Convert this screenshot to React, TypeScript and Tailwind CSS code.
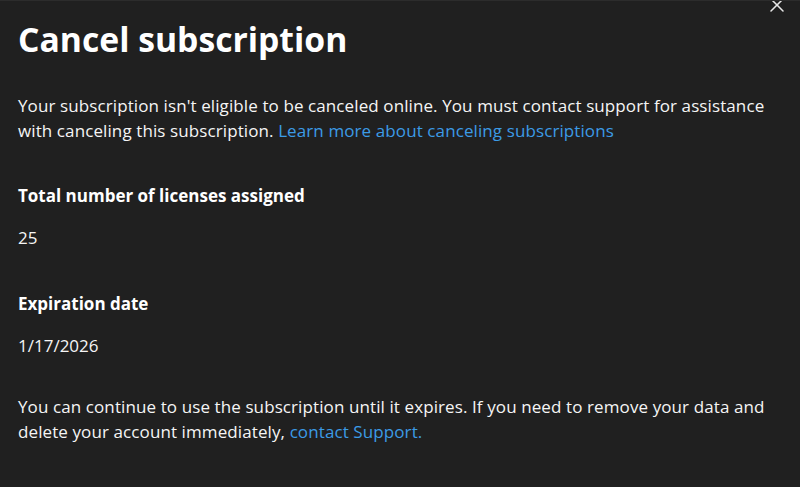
import { X } from 'lucide-react';

const App = () => {
  return (
    <div className="relative w-[800px] h-[487px] overflow-hidden bg-[#202020] border-t border-[#2c2c2c] text-[#f5f5f5] font-['Open_Sans',sans-serif]">
      <button className="absolute -top-[8px] right-[11px] text-[#e8e8e8]">
        <X className="w-[24px] h-[24px]" strokeWidth={1.5} />
      </button>

      <div className="px-[18px] pt-[13px]">
        <h1 className="text-[33.7px] leading-[50px] font-bold text-white">Cancel subscription</h1>

        <p className="mt-[29px] text-[17px] leading-[25px] tracking-[0.1px]">
          Your subscription isn't eligible to be canceled online. You must contact support for assistance
          with canceling this subscription.{' '}
          <a className="text-[#3c9be6]">Learn more about canceling subscriptions</a>
        </p>

        <div className="mt-[41px]">
          <h2 className="text-[17px] leading-[24px] font-bold text-white">Total number of licenses assigned</h2>
          <p className="mt-[18px] text-[17px] leading-[24px]">25</p>
        </div>

        <div className="mt-[42px]">
          <h2 className="text-[17px] leading-[24px] font-bold text-white">Expiration date</h2>
          <p className="mt-[18px] text-[17px] leading-[24px]">1/17/2026</p>
        </div>

        <p className="mt-[36px] text-[17px] leading-[25px] tracking-[0.1px]">
          You can continue to use the subscription until it expires. If you need to remove your data and
          delete your account immediately,{' '}
          <a className="text-[#3c9be6]">contact Support.</a>
        </p>
      </div>
    </div>
  );
};

export default App;
